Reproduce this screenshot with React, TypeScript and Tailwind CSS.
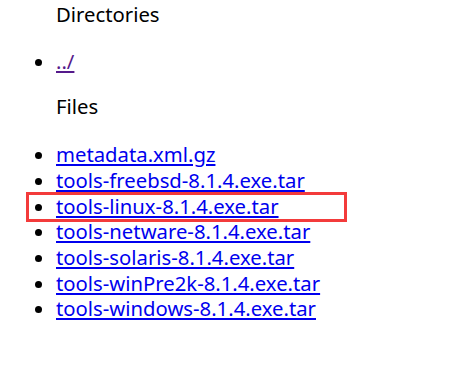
import React from "react";

const files = [
  "metadata.xml.gz",
  "tools-freebsd-8.1.4.exe.tar",
  "tools-linux-8.1.4.exe.tar",
  "tools-netware-8.1.4.exe.tar",
  "tools-solaris-8.1.4.exe.tar",
  "tools-winPre2k-8.1.4.exe.tar",
  "tools-windows-8.1.4.exe.tar",
];

const App = () => {
  return (
    <div className="min-h-[389px] bg-white text-black text-[20.3px] leading-[25.7px] font-['Noto_Sans',sans-serif]">
      <p className="pl-[56px] pt-[2px]">Directories</p>
      <ul className="mt-[21px] pl-[56px] list-disc">
        <li>
          <a href="#" className="text-[#551a8b] underline">../</a>
        </li>
      </ul>
      <p className="mt-[20px] pl-[56px]">Files</p>
      <ul className="mt-[22px] pl-[56px] list-disc">
        {files.map((f) => (
          <li key={f} className="relative">
            <a href="#" className="text-[#0000ee] underline">{f}</a>
            {f === "tools-linux-8.1.4.exe.tar" && (
              <span className="absolute left-[-30px] top-[-2px] w-[321px] h-[30px] border-[3px] border-[#f33b3b] pointer-events-none" />
            )}
          </li>
        ))}
      </ul>
    </div>
  );
};

export default App;
